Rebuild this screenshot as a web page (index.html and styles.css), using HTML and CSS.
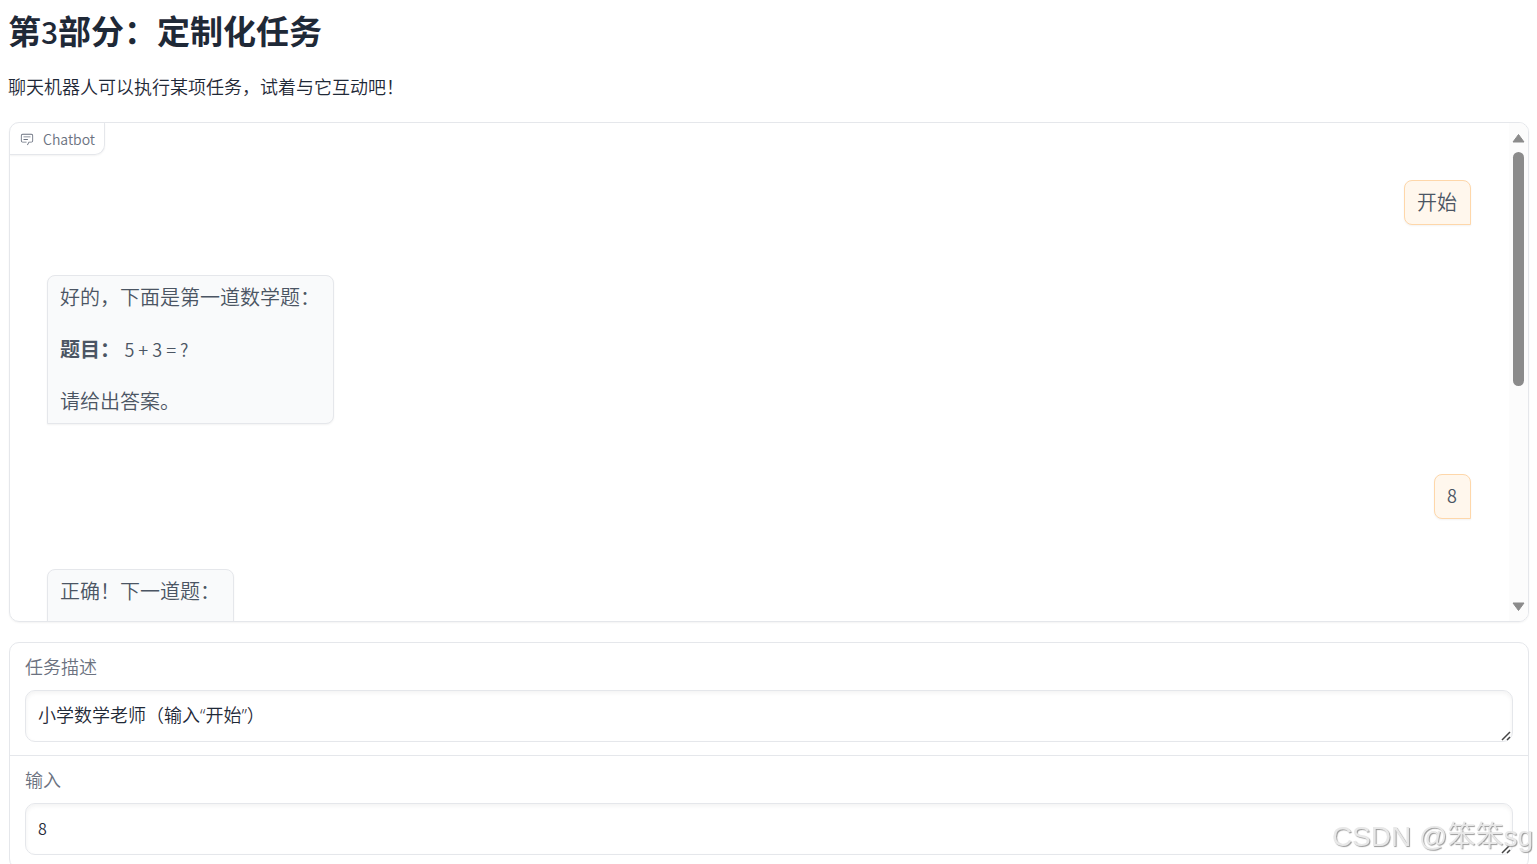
FILE: index.html
```html
<!DOCTYPE html>
<html lang="zh-CN">
<head>
  <meta charset="UTF-8" />
  <meta name="viewport" content="width=device-width, initial-scale=1.0" />
  <title>定制化任务</title>
  <link rel="stylesheet" href="styles.css">
</head>
<body>
  <main class="container">
    <h1>第<span class="number">3</span>部分：定制化任务</h1>
    <p class="intro">聊天机器人可以执行某项任务，试着与它互动吧！</p>

    <section class="chatbot">
      <div class="chat-label">
        <svg class="chat-icon" viewBox="0 0 32 32" fill="currentColor" aria-hidden="true">
          <path d="M17.74 30L16 29l4-7h6a2 2 0 0 0 2-2V8a2 2 0 0 0-2-2H6a2 2 0 0 0-2 2v12a2 2 0 0 0 2 2h9v2H6a4 4 0 0 1-4-4V8a4 4 0 0 1 4-4h20a4 4 0 0 1 4 4v12a4 4 0 0 1-4 4h-4.840z" />
          <path d="M8 10h16v2H8zM8 16h10v2H8z" />
        </svg>
        <span>Chatbot</span>
      </div>
      <div class="messages">
        <div class="message user"><p>开始</p></div>
        <div class="message bot">
          <p>好的，下面是第一道数学题：</p>
          <p><strong>题目：</strong> <span class="latin">5 + 3 = ?</span></p>
          <p>请给出答案。</p>
        </div>
        <div class="message user"><p class="latin">8</p></div>
        <div class="message bot">
          <p>正确！下一道题：</p>
        </div>
      </div>
      <div class="scrollbar" aria-hidden="true">
        <svg class="arrow" viewBox="0 0 13 10"><path d="M6.500 1.500L12 9H1z" /></svg>
        <div class="track"><div class="thumb"></div></div>
        <svg class="arrow" viewBox="0 0 13 10"><path d="M6.500 8.500L12 1H1z" /></svg>
      </div>
    </section>

    <form class="form">
      <div class="block">
        <label for="task">任务描述</label>
        <div class="field">
          <textarea id="task" class="task" rows="1">小学数学老师（输入“开始”）</textarea>
          <svg class="grip" viewBox="0 0 11 11" aria-hidden="true"><path d="M1 10L9 2M6 10l3-3" /></svg>
        </div>
      </div>
      <div class="block">
        <label for="input">输入</label>
        <div class="field">
          <textarea id="input" rows="1">8</textarea>
          <svg class="grip" viewBox="0 0 11 11" aria-hidden="true"><path d="M1 10L9 2M6 10l3-3" /></svg>
        </div>
      </div>
    </form>
  </main>
  <div class="watermark">CSDN @笨笨sg</div>
</body>
</html>
```
FILE: styles.css
```css
* {
  box-sizing: border-box;
}
body {
  margin: 0;
  height: 100vh;
  overflow: hidden;
  background: white;
  color: #1f2937;
  font-family: "Noto Sans CJK SC", sans-serif;
  font-size: 18px;
  font-weight: 350;
}
.container {
  padding: 6px 8px 8px;
}
h1 {
  margin: 0 0 16px;
  font-size: 33px;
  line-height: 48px;
  font-weight: bold;
}
.number {
  font-size: 30px;
  font-weight: 500;
}
.intro {
  margin: 0 0 21px;
  line-height: 30px;
}
.chatbot {
  position: relative;
  display: flex;
  height: 500px;
  margin-left: 1px;
  overflow: hidden;
  border: 1px solid #e5e7eb;
  border-radius: 10px;
  box-shadow: 0 1px 2px rgba(0, 0, 0, 0.05);
}
.chat-label {
  position: absolute;
  top: 0;
  left: 0;
  display: flex;
  align-items: center;
  gap: 9px;
  height: 32px;
  padding: 0 9px 0 10px;
  border: solid #e5e7eb;
  border-width: 0 1px 1px 0;
  border-radius: 0 0 10px 0;
  box-shadow: 0 1px 2px rgba(0, 0, 0, 0.05);
  color: #6b7280;
  font-size: 14px;
}
.chat-icon {
  width: 14px;
  height: 14px;
}
.messages {
  flex: 1;
  display: flex;
  flex-direction: column;
  gap: 50px;
  padding: 57px 38px 0 37px;
}
.message {
  flex-shrink: 0;
  display: flex;
  flex-direction: column;
  gap: 23px;
  padding: 6px 13px 8px 12px;
  border: 1px solid #e5e7eb;
  border-radius: 8px;
  box-shadow: 0 1px 2px rgba(0, 0, 0, 0.05);
  color: #4b5563;
  font-size: 20px;
  line-height: 29px;
}
.message p {
  margin: 0;
}
.message strong {
  font-weight: 700;
}
.message .latin {
  font-size: 18px;
}
.message span {
  line-height: 18px;
}
.user {
  align-self: flex-end;
  background: #fff7ed;
  border-color: #fed7aa;
  border-bottom-right-radius: 0;
}
.bot {
  align-self: flex-start;
  min-height: 60px;
  background: #f9fafb;
  border-bottom-left-radius: 0;
}
.scrollbar {
  display: flex;
  flex-direction: column;
  align-items: center;
  gap: 9px;
  width: 19px;
  padding: 10px 0 9px;
  background: #fcfcfc;
}
.arrow {
  width: 13px;
  height: 10px;
  fill: #8b8b8b;
  stroke: #8b8b8b;
  stroke-linejoin: round;
}
.track {
  flex: 1;
}
.thumb {
  width: 11px;
  height: 53%;
  border-radius: 6px;
  background: #8b8b8b;
}
.form {
  margin: 20px 0 0 1px;
  border: 1px solid #e5e7eb;
  border-radius: 10px;
}
.block {
  padding: 11px 15px 13px;
}
.block + .block {
  border-top: 1px solid #e5e7eb;
}
label {
  display: block;
  margin-bottom: 12px;
  color: #6b7280;
  line-height: 24px;
}
.field {
  position: relative;
}
textarea {
  display: block;
  width: 100%;
  height: 52px;
  padding: 11px 12px 13px;
  border: 1px solid #e5e7eb;
  border-radius: 10px;
  outline: none;
  resize: none;
  overflow: hidden;
  background: white;
  box-shadow: inset 0 2px 4px rgba(0, 0, 0, 0.05);
  color: #1f2937;
  font-family: inherit;
  font-size: 16px;
  font-weight: inherit;
  line-height: 26px;
}
/* narrow curly quotes between the Chinese characters */
.task {
  font-family: "Open Sans", "Noto Sans CJK SC", sans-serif;
  font-size: 18px;
}
.grip {
  position: absolute;
  right: 1px;
  bottom: 1px;
  width: 11px;
  height: 11px;
  fill: none;
  stroke: #444;
  stroke-width: 1.500;
}
.watermark {
  position: fixed;
  right: 4px;
  bottom: 5px;
  overflow: hidden;
  white-space: nowrap;
  color: #e8e8e8;
  font-family: "Liberation Sans", "Noto Sans CJK SC", sans-serif;
  font-size: 28px;
  line-height: 44px;
  text-shadow: 1px 1px 1px #999;
}
```
